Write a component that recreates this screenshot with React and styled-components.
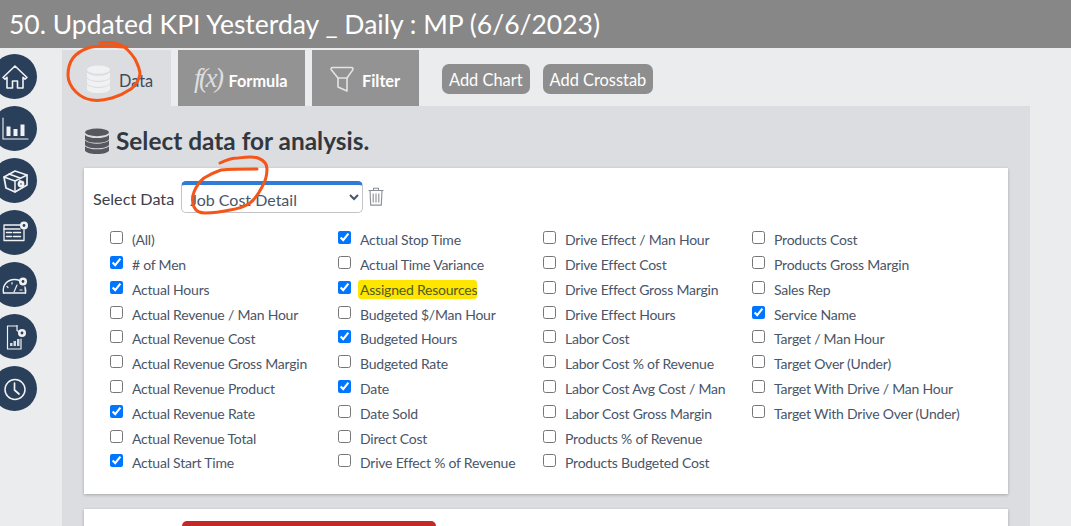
import styled, { createGlobalStyle } from "styled-components";

const GlobalStyle = createGlobalStyle`
  html, body {
    margin: 0;
    padding: 0;
    background: #ebecee;
    font-family: Lato, "Liberation Sans", sans-serif;
    overflow: hidden;
  }
  * { box-sizing: border-box; }
`;

const Page = styled.div`
  position: relative;
  width: 1071px;
  height: 526px;
  overflow: hidden;
  background: #ebecee;
`;

const Header = styled.header`
  height: 48px;
  padding-left: 9px;
  display: flex;
  align-items: center;
  background: #878787;
  color: #fff;
  font-size: 26.5px;
  line-height: 1;
`;

const Main = styled.div`
  display: flex;
  height: 478px;
`;

const Sidebar = styled.nav`
  width: 62px;
  padding-top: 6px;
  display: flex;
  flex-direction: column;
  gap: 7px;
`;

const NavButton = styled.div`
  width: 45px;
  height: 45px;
  margin-left: -8px;
  border-radius: 50%;
  background: #2a3f5a;
  display: flex;
  align-items: center;
  justify-content: center;
  flex-shrink: 0;

  svg {
    width: 30px;
    height: 30px;
    fill: none;
    stroke: #f1f2f4;
    stroke-width: 1.4;
    stroke-linecap: round;
    stroke-linejoin: round;
  }
`;

const Workspace = styled.div`
  width: 968px;
  display: flex;
  flex-direction: column;
`;

const TabRow = styled.div`
  height: 58px;
  padding-top: 2px;
  display: flex;
  gap: 7px;
`;

const Tab = styled.div`
  width: ${(p) => p.$width}px;
  display: flex;
  align-items: center;
  background: ${(p) => (p.$active ? "#dcdde0" : "#939393")};
  color: ${(p) => (p.$active ? "#3f4a5c" : "#fff")};
  font-size: 16.3px;
  font-weight: ${(p) => (p.$active ? 400 : 700)};
  padding-left: ${(p) => p.$pad}px;
  gap: ${(p) => p.$gap}px;
`;

const TabLabel = styled.span`
  position: relative;
  top: 2px;
`;

const TabDbIcon = styled.svg`
  width: 25px;
  height: 28px;
  position: relative;
  top: 1px;
`;

const FormulaGlyph = styled.span`
  font-family: "Liberation Serif", serif;
  font-style: italic;
  font-weight: 400;
  font-size: 27px;
  color: #dedede;
  letter-spacing: -2.5px;
`;

const FilterIcon = styled.svg`
  width: 26px;
  height: 28px;
  position: relative;
  top: 1px;
  fill: none;
  stroke: #e4e4e4;
  stroke-width: 1.6;
  stroke-linejoin: round;
`;

const ActionGroup = styled.div`
  margin-left: 16px;
  display: flex;
  align-items: center;
  gap: 13px;
  padding-top: 2px;
`;

const ActionButton = styled.div`
  height: 30px;
  padding: 0 7px;
  display: flex;
  align-items: center;
  border-radius: 7px;
  background: #8e8e8e;
  color: #fff;
  font-size: 16.4px;
`;

const Panel = styled.section`
  flex: 1;
  background: #dcdde0;
  padding: 0 22px;
  overflow: hidden;
`;

const PanelTitle = styled.h2`
  margin: 0;
  height: 62px;
  padding-top: 7px;
  display: flex;
  align-items: center;
  gap: 6px;
  color: #33383f;
  font-size: 24.4px;
  font-weight: 700;
`;

const Card = styled.div`
  background: #fff;
  box-shadow: 0 1px 3px rgba(0, 0, 0, 0.25);
`;

const DataCard = styled(Card)`
  height: 326px;
  padding: 13px 9px 0;
`;

const SelectRow = styled.div`
  height: 32px;
  display: flex;
  align-items: center;
  gap: 7px;
  color: #3c4048;
  font-size: 16.2px;
`;

const SelectLabel = styled.span`
  position: relative;
  top: 1px;
`;

const DataSelect = styled.select`
  width: 182px;
  height: 32px;
  padding: 2px 4px 0 4px;
  border: 1px solid #c2c4c8;
  border-top: 4px solid #2f7bd8;
  border-radius: 5px;
  background: #fff;
  color: #47566b;
  font-family: Lato, sans-serif;
  font-size: 16px;
`;

const TrashIcon = styled.svg`
  width: 16px;
  height: 19px;
  margin-left: -2px;
  position: relative;
  top: -1px;
  fill: none;
  stroke: #8b8f94;
  stroke-width: 1.1;
`;

const FieldGrid = styled.div`
  margin-top: 14.4px;
  padding-left: 17px;
  display: grid;
  grid-template-columns: 228px 205px 209px 1fr;
  grid-template-rows: repeat(10, 24.8px);
  grid-auto-flow: column;
`;

const FieldRow = styled.label`
  display: flex;
  align-items: center;
  gap: 9px;
  color: #4a5568;
  font-size: 14px;
  letter-spacing: -0.22px;
  white-space: nowrap;
`;

const FieldCheck = styled.input`
  width: 13px;
  height: 13px;
  margin: 0;
  position: relative;
  top: -2px;
  accent-color: #0075ff;
`;

const FieldText = styled.span`
  border-radius: 3px;
  ${(p) =>
    p.$marked &&
    `
    background: #ffe600;
    color: #4f5a25;
    margin-left: -2px;
    padding: 1px 0 1px 2px;
  `}
`;

const SecondCard = styled(Card)`
  height: 40px;
  margin-top: 15px;
  padding: 12px 0 0 98px;
`;

const RedBar = styled.div`
  width: 254px;
  height: 30px;
  border-radius: 5px;
  background: #c62828;
`;

const Scribble = styled.svg`
  position: absolute;
  left: 0;
  top: 0;
  pointer-events: none;
  fill: none;
  stroke: #f4561a;
  stroke-width: 3;
  stroke-linecap: round;
  stroke-linejoin: round;
`;

const columns = [
  [
    ["(All)", false],
    ["# of Men", true],
    ["Actual Hours", true],
    ["Actual Revenue / Man Hour", false],
    ["Actual Revenue Cost", false],
    ["Actual Revenue Gross Margin", false],
    ["Actual Revenue Product", false],
    ["Actual Revenue Rate", true],
    ["Actual Revenue Total", false],
    ["Actual Start Time", true],
  ],
  [
    ["Actual Stop Time", true],
    ["Actual Time Variance", false],
    ["Assigned Resources", true, true],
    ["Budgeted $/Man Hour", false],
    ["Budgeted Hours", true],
    ["Budgeted Rate", false],
    ["Date", true],
    ["Date Sold", false],
    ["Direct Cost", false],
    ["Drive Effect % of Revenue", false],
  ],
  [
    ["Drive Effect / Man Hour", false],
    ["Drive Effect Cost", false],
    ["Drive Effect Gross Margin", false],
    ["Drive Effect Hours", false],
    ["Labor Cost", false],
    ["Labor Cost % of Revenue", false],
    ["Labor Cost Avg Cost / Man", false],
    ["Labor Cost Gross Margin", false],
    ["Products % of Revenue", false],
    ["Products Budgeted Cost", false],
  ],
  [
    ["Products Cost", false],
    ["Products Gross Margin", false],
    ["Sales Rep", false],
    ["Service Name", true],
    ["Target / Man Hour", false],
    ["Target Over (Under)", false],
    ["Target With Drive / Man Hour", false],
    ["Target With Drive Over (Under)", false],
  ],
];

function Gear({ cx, cy, r = 3 }) {
  return (
    <g>
      <circle cx={cx} cy={cy} r={r + 1} fill="#f1f2f4" stroke="none" />
      <circle cx={cx} cy={cy} r={r - 1.6} fill="#2a3f5a" stroke="none" />
    </g>
  );
}

const navIcons = [
  // home
  <svg viewBox="0 0 30 30" key="home">
    <path d="M3 15.5 15 4l12 11.5-2 1.6-2-1.8V26h-5.5v-7h-5v7H7V15.3l-2 1.8z" strokeWidth="1.6" />
  </svg>,
  // bars
  <svg viewBox="0 0 30 30" key="bars">
    <path d="M3 4v21h25" strokeWidth="1.1" />
    <path d="M6.5 12.5h4V22h-4zM13.5 15h4v7h-4zM20.5 10.5h4V22h-4z" fill="#f1f2f4" stroke="none" />
  </svg>,
  // box with gear
  <svg viewBox="0 0 30 30" key="box">
    <path d="M4 11 15 5l12 4v10l-12 7-9-4z" strokeWidth="1.7" />
    <path d="M4 11l11 4 12-6M15 15v11M9 8l11 4v3" strokeWidth="1.5" />
    <Gear cx={21} cy={18} r={2.4} />
  </svg>,
  // form with gear
  <svg viewBox="0 0 30 30" key="form">
    <path d="M24 12v10.5H4V7h16.5" strokeWidth="1.3" />
    <path d="M4 11h16" strokeWidth="1.3" />
    <path d="M6.5 14.5h5M13.5 14.5h7M6.5 18.5h5M13.5 18.5h7" strokeWidth="1.5" />
    <Gear cx={24} cy={7.5} r={3} />
  </svg>,
  // gauge with gear
  <svg viewBox="0 0 30 30" key="gauge">
    <path d="M3.5 23c-1.5-8 4-13.5 11-13.5 2 0 3.5.3 5 1M25 17c.8 2 1 4 .5 6z" strokeWidth="1.4" />
    <path d="M3.5 23h22" strokeWidth="1.4" />
    <path d="M14 22l3-7M7 16.5l1 1M12 12.5v1.5M20 20h2" strokeWidth="1.2" />
    <Gear cx={23} cy={11.5} r={3} />
  </svg>,
  // report with gear
  <svg viewBox="0 0 30 30" key="report">
    <path d="M17 4H7.5v23H21V17" strokeWidth="1.2" />
    <path d="M17 3.5v5l4 2.5" strokeWidth="1.2" />
    <path d="M10 24v-3h2.5v3zM13.5 24v-5H16v5zM17 24v-7h2.5v7z" fill="#d4d8de" stroke="none" />
    <Gear cx={22} cy={11} r={3} />
  </svg>,
  // clock
  <svg viewBox="0 0 30 30" key="clock">
    <circle cx="15" cy="15.5" r="10" strokeWidth="1.5" />
    <path d="M14.5 9v7l4.5 4" strokeWidth="1.7" />
  </svg>,
];

function DatabaseIcon({ color, ...rest }) {
  const bands = [7.5, 14, 20.5];
  return (
    <svg viewBox="0 0 26 30" preserveAspectRatio="none" {...rest}>
      <ellipse cx="13" cy="5" rx="12" ry="4.4" fill={color} />
      {bands.map((y) => (
        <path
          key={y}
          d={`M1 ${y + 0.5}c2.5 2.5 6.5 3.6 12 3.6s9.5-1.1 12-3.6v4.6c0 2.4-5.4 4.4-12 4.4S1 ${y + 7.5} 1 ${y + 5.1}z`}
          fill={color}
        />
      ))}
    </svg>
  );
}

const TitleDbIcon = styled(DatabaseIcon)`
  width: 26px;
  height: 26px;
`;

function App() {
  return (
    <Page>
      <GlobalStyle />
      <Header>50. Updated KPI Yesterday _ Daily : MP (6/6/2023)</Header>
      <Main>
        <Sidebar>
          {navIcons.map((icon) => (
            <NavButton key={icon.key}>{icon}</NavButton>
          ))}
        </Sidebar>
        <Workspace>
          <TabRow>
            <Tab $active $width={109} $pad={24} $gap={8}>
              <TabDbIcon as={DatabaseIcon} color="#f0f1f2" />
              <TabLabel>Data</TabLabel>
            </Tab>
            <Tab $width={127} $pad={16} $gap={7}>
              <FormulaGlyph>f(x)</FormulaGlyph>
              <TabLabel>Formula</TabLabel>
            </Tab>
            <Tab $width={107} $pad={17} $gap={7}>
              <FilterIcon viewBox="0 0 26 28">
                <path d="M3.5 2.5h19c1.4 0 1.9 1.4 1.1 2.6L18 13H9L2.5 5.1C1.6 3.9 2.1 2.5 3.5 2.5z" />
                <path d="M9 13v9l9 4V13" />
              </FilterIcon>
              <TabLabel>Filter</TabLabel>
            </Tab>
            <ActionGroup>
              <ActionButton>Add Chart</ActionButton>
              <ActionButton>Add Crosstab</ActionButton>
            </ActionGroup>
          </TabRow>
          <Panel>
            <PanelTitle>
              <TitleDbIcon color="#55585e" />
              Select data for analysis.
            </PanelTitle>
            <DataCard>
              <SelectRow>
                <SelectLabel>Select Data</SelectLabel>
                <DataSelect defaultValue="Job Cost Detail">
                  <option>Job Cost Detail</option>
                </DataSelect>
                <TrashIcon viewBox="0 0 16 19">
                  <path d="M.5 3.5h15M5.5 3.5V1.2h5v2.3M2 3.5l.7 14.6h10.6l.7-14.6M5.2 6.5v9M8 6.5v9M10.8 6.5v9" />
                </TrashIcon>
              </SelectRow>
              <FieldGrid>
                {columns.flat().map(([name, checked, marked]) => (
                  <FieldRow key={name}>
                    <FieldCheck type="checkbox" defaultChecked={checked} />
                    <FieldText $marked={marked}>{name}</FieldText>
                  </FieldRow>
                ))}
              </FieldGrid>
            </DataCard>
            <SecondCard>
              <RedBar />
            </SecondCard>
          </Panel>
        </Workspace>
      </Main>
      <Scribble width="1071" height="526" viewBox="0 0 1071 526">
        <path d="M100 43c8-1 15 0 21 2 6 3 10 8 14 14 3 6 5 11 5 15-1 6-4 11-9 15-6 4-12 7-19 9-7 2-14 3-20 2-7-1-12-4-16-8-5-5-8-11-8-17 0-7 2-13 5-17 4-5 9-8 15-10 6-2 12-2 18-2 7 0 14 1 21 1" />
        <path d="M220 163c6-3 11-5 18-5 8-1 15-2 20 0 5 2 9 6 9 11 0 6-2 13-5 18-3 6-7 12-12 16-6 4-13 6-20 7-9 2-18 3-25 3-5 0-9-2-11-6-2-5-2-10 0-15 2-5 5-10 10-14 5-3 11-6 17-8 11-1 24-1 36-1" />
      </Scribble>
    </Page>
  );
}

export default App;
